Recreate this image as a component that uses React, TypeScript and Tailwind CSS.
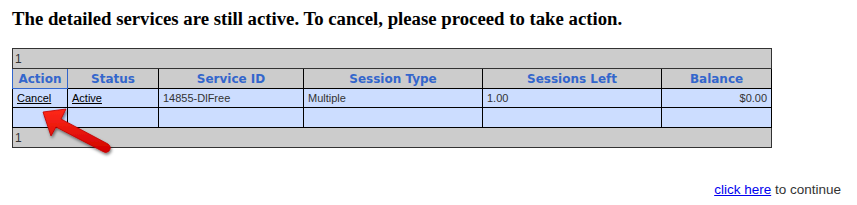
import React from "react";

export default function App() {
  const td = "border border-black px-[4px] h-[19px] text-[11px] text-[#333] bg-[#ccddff] align-middle";
  const th = "border border-black h-[20px] bg-[#cccccc] text-[#3366cc] text-[12px] font-bold text-center align-middle";
  return (
    <div className="relative w-[857px] h-[205px] bg-white" style={{ fontFamily: '"Liberation Sans", Arial, sans-serif' }}>
      <h1 className="pl-[12px] pt-[8px] text-[18.75px] font-bold text-black leading-[22px]" style={{ fontFamily: '"Liberation Serif", "Times New Roman", serif' }}>
        The detailed services are still active. To cancel, please proceed to take action.
      </h1>
      <div className="pl-[12px] pt-[18px]">
        <table className="border-collapse border border-[#333] w-[759px] table-fixed">
          <colgroup>
            <col className="w-[55px]" />
            <col className="w-[91px]" />
            <col className="w-[145px]" />
            <col className="w-[179px]" />
            <col className="w-[179px]" />
            <col className="w-[110px]" />
          </colgroup>
          <tbody>
            <tr>
              <td colSpan={6} className="border border-[#333] bg-[#cccccc] h-[20px] px-[2px] text-[12px] text-[#333] align-middle">1</td>
            </tr>
            <tr style={{ fontFamily: '"DejaVu Sans", Verdana, sans-serif' }}>
              <th className={th + " !border-[#3366cc]"}>Action</th>
              <th className={th}>Status</th>
              <th className={th}>Service ID</th>
              <th className={th}>Session Type</th>
              <th className={th}>Sessions Left</th>
              <th className={th}>Balance</th>
            </tr>
            <tr>
              <td className={td}><a href="#" className="underline text-black">Cancel</a></td>
              <td className={td}><a href="#" className="underline text-black">Active</a></td>
              <td className={td}>14855-DlFree</td>
              <td className={td}>Multiple</td>
              <td className={td}>1.00</td>
              <td className={td + " text-right"}>$0.00</td>
            </tr>
            <tr>
              <td className={td + " h-[20px]"}></td>
              <td className={td}></td>
              <td className={td}></td>
              <td className={td}></td>
              <td className={td}></td>
              <td className={td}></td>
            </tr>
            <tr>
              <td colSpan={6} className="border border-[#333] bg-[#cccccc] h-[20px] px-[2px] text-[12px] text-[#333] align-middle">1</td>
            </tr>
          </tbody>
        </table>
      </div>
      <div className="flex justify-end pr-[16px] pt-[32px] text-[13.5px] text-[#333]">
        <span><a href="#" className="underline text-[#0000ee]">click here</a> to continue</span>
      </div>
      <svg className="absolute left-[36px] top-[106px]" width="84" height="56" viewBox="0 0 84 56">
        <defs>
          <filter id="sh" x="-20%" y="-20%" width="150%" height="160%">
            <feDropShadow dx="1" dy="2" stdDeviation="1.5" floodColor="#000" floodOpacity="0.5" />
          </filter>
          <linearGradient id="g" x1="0" y1="0" x2="0" y2="1">
            <stop offset="0" stopColor="#ff2a1a" />
            <stop offset="1" stopColor="#d00000" />
          </linearGradient>
        </defs>
        <g filter="url(#sh)">
          <path d="M7 6 L30 3 L25 13 L72 38 Q76 41 73 45 Q70 48 66 45 L20 21 L15 30 Z" fill="url(#g)" stroke="#c00000" strokeWidth="0.8" strokeLinejoin="round" />
        </g>
      </svg>
    </div>
  );
}
